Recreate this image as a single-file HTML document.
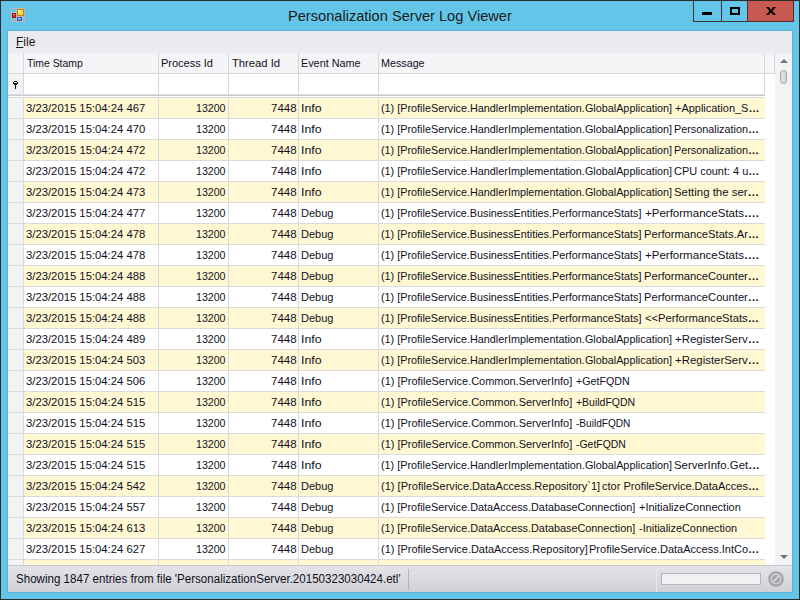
<!DOCTYPE html><html><head><meta charset="utf-8"><style>html,body{margin:0;padding:0;width:800px;height:600px;overflow:hidden;background:#2b2b2b;font-family:"Liberation Sans",sans-serif;}
div,svg{position:absolute;box-sizing:border-box;}
.t{white-space:nowrap;line-height:1;transform-origin:0 0;}
#frame{left:1px;top:1px;width:798px;height:598px;background:#63c6e8;}
#cframe{left:7px;top:30px;width:786px;height:563px;background:#58b3d4;}
#appicon{left:11px;top:8px;}
.tbtn{top:0;height:22px;border:1px solid #383838;border-top-color:#2b2b2b;}
#bmin{left:693px;width:29px;background:#63c6e8;}
#bmax{left:721px;width:27px;background:#63c6e8;}
#bclose{left:747px;width:47px;background:#c75a50;border-color:#5a2a26;border-top-color:#2b2b2b;}
.gmin{left:8px;top:11px;width:10px;height:3px;background:#000;}
.gmax{left:8px;top:6px;width:10px;height:8px;border:2px solid #000;}
.gx{left:18px;top:6px;}
#menu{left:8px;top:31px;width:784px;height:22px;background:#ebebef;}
.mi{color:#1a1a1a;line-height:14px;white-space:nowrap;}
#menu .mi{display:none;}
#hdr{left:8px;top:53px;width:767px;height:21px;background:#f5f5f7;}
.vl{width:1px;background:#d6d6dd;}
.hl{height:1px;background:#d6d6dd;}
#filt{left:8px;top:74px;width:757px;height:20px;background:#fff;}
#find{left:8px;top:74px;width:15px;height:20px;background:#f3f3f6;}
#pin{left:13px;top:81px;}
#sep{left:8px;top:94px;width:757px;height:4px;border-top:1px solid #dcdce2;border-bottom:1px solid #d6d6dd;background:linear-gradient(#c9c9d1 0 1px,#fff 1px 2px);}
#rightgap{left:765px;top:74px;width:10px;height:491px;background:#fff;}
#scroll{left:775px;top:53px;width:17px;height:512px;background:#f3f3f5;}
.arr{left:5px;width:0;height:0;border-left:4px solid transparent;border-right:4px solid transparent;}
.arr.up{top:6px;border-bottom:4px solid #6e7080;}
.arr.dn{top:502px;border-top:4px solid #6e7080;}
.thumb{left:5px;top:17px;width:7px;height:14px;border:1px solid #9ea0aa;border-radius:4px;background:linear-gradient(90deg,#e2e2e6,#d4d4da);}
#grid{left:8px;top:97px;width:757px;height:468px;overflow:hidden;background:#fff;border-top:1px solid #d9d9e0;}
#grid .vl{background:#d9d9e0;}
.row{left:0;width:757px;height:21px;border-bottom:1px solid #d9d9e0;background:#fff;}
.row{background:linear-gradient(90deg,#f3f3f6 0 15px,#d9d9e0 15px 16px,#fff 16px);}
.row.odd{background:linear-gradient(90deg,#f3f3f6 0 15px,#d9d9e0 15px 16px,#fff8d3 16px);}
#gind{display:none;}
#status{left:8px;top:565px;width:784px;height:27px;border-top:1px solid #c8c8cf;background:linear-gradient(#e4e4e8,#d0d0d6);}
#ssep{left:400px;top:3px;width:1px;height:21px;background:#b4b4bb;}
#ssep2{left:648px;top:0;width:1px;height:26px;background:#e8e8ec;}
#prog{left:653px;top:7px;width:100px;height:12px;border:1px solid #b6b6bd;background:#f1f1f3;}
#cancel{left:760px;top:5px;}
.el{letter-spacing:.5px;padding-left:.5px;font-weight:bold;}
</style></head><body>
<div id="frame"></div><div id="cframe"></div>
<svg id="appicon" width="14" height="14" viewBox="0 0 14 14" shape-rendering="crispEdges">
<rect x="0" y="0" width="14" height="14" fill="#bdb6b6"/>
<rect x="1" y="1" width="4" height="3" fill="#63c6e8"/>
<rect x="1" y="11" width="2" height="2" fill="#63c6e8"/>
<rect x="4" y="11" width="1" height="2" fill="#63c6e8"/>
<rect x="12" y="9" width="1" height="4" fill="#63c6e8"/>
<rect x="6" y="1" width="7" height="7" fill="#b08a14"/>
<rect x="7" y="2" width="5" height="5" fill="#ffd23e"/>
<rect x="7" y="2" width="3" height="3" fill="#ffe684"/>
<rect x="7" y="2" width="1" height="1" fill="#fff4c4"/>
<rect x="1" y="5" width="4" height="5" fill="#9a1410"/>
<rect x="2" y="6" width="2" height="3" fill="#d8392c"/>
<rect x="2" y="6" width="2" height="1" fill="#f08070"/>
<rect x="6" y="9" width="5" height="4" fill="#2c5cc0"/>
<rect x="7" y="10" width="3" height="2" fill="#6e9cf0"/>
<rect x="7" y="10" width="2" height="1" fill="#b0ccff"/>
</svg>
<div id="bmin" class="tbtn"><div class="gmin"></div></div>
<div id="bmax" class="tbtn"><div class="gmax"></div></div>
<div id="bclose" class="tbtn"><svg class="gx" width="10" height="8" viewBox="0 0 10 8"><path d="M0 0 H2.9 L5 2.7 L7.1 0 H10 L6.5 4 L10 8 H7.1 L5 5.3 L2.9 8 H0 L3.5 4 Z" fill="#000"/></svg></div>
<div id="menu"><span class="mi"><u>F</u>ile</span></div>
<div id="hdr"></div>
<div class="vl" style="left:23px;top:53px;height:21px"></div>
<div class="vl" style="left:158px;top:53px;height:21px"></div>
<div class="vl" style="left:228px;top:53px;height:21px"></div>
<div class="vl" style="left:298px;top:53px;height:21px"></div>
<div class="vl" style="left:378px;top:53px;height:21px"></div>
<div class="vl" style="left:764px;top:53px;height:21px"></div>
<div class="vl" style="left:774px;top:53px;height:21px"></div>
<div class="hl" style="left:8px;top:73px;width:767px"></div>
<div id="filt"></div><div id="find"></div>
<div class="vl" style="left:23px;top:74px;height:20px"></div>
<div class="vl" style="left:158px;top:74px;height:20px"></div>
<div class="vl" style="left:228px;top:74px;height:20px"></div>
<div class="vl" style="left:298px;top:74px;height:20px"></div>
<div class="vl" style="left:378px;top:74px;height:20px"></div>
<div class="vl" style="left:764px;top:74px;height:20px"></div>
<svg id="pin" width="5" height="8" viewBox="0 0 5 8" shape-rendering="crispEdges"><path d="M1 0H4V1H5V3H4V4H3V8H2V4H1V3H0V1H1Z" fill="#141414"/><rect x="1" y="1" width="3" height="1" fill="#e8e8ee"/></svg>
<div id="sep"></div>
<div id="rightgap"></div><div id="scroll"><div class="arr up"></div><div class="thumb"></div><div class="arr dn"></div></div>
<div id="grid">
<div class="row odd" style="top:0px"></div>
<div class="row" style="top:21px"></div>
<div class="row odd" style="top:42px"></div>
<div class="row" style="top:63px"></div>
<div class="row odd" style="top:84px"></div>
<div class="row" style="top:105px"></div>
<div class="row odd" style="top:126px"></div>
<div class="row" style="top:147px"></div>
<div class="row odd" style="top:168px"></div>
<div class="row" style="top:189px"></div>
<div class="row odd" style="top:210px"></div>
<div class="row" style="top:231px"></div>
<div class="row odd" style="top:252px"></div>
<div class="row" style="top:273px"></div>
<div class="row odd" style="top:294px"></div>
<div class="row" style="top:315px"></div>
<div class="row odd" style="top:336px"></div>
<div class="row" style="top:357px"></div>
<div class="row odd" style="top:378px"></div>
<div class="row" style="top:399px"></div>
<div class="row odd" style="top:420px"></div>
<div class="row" style="top:441px"></div>
<div class="row odd" style="top:462px"></div>
<div id="gind"></div>
<div class="vl" style="left:15px;top:0;height:468px"></div>
<div class="vl" style="left:150px;top:0;height:468px"></div>
<div class="vl" style="left:220px;top:0;height:468px"></div>
<div class="vl" style="left:290px;top:0;height:468px"></div>
<div class="vl" style="left:370px;top:0;height:468px"></div>
</div>
<div id="status"><div id="ssep"></div><div id="ssep2"></div><div id="prog"></div><svg id="cancel" width="17" height="17" viewBox="0 0 17 17"><circle cx="8" cy="8" r="6.6" fill="none" stroke="#a6a6a8" stroke-width="2.4"/><circle cx="8" cy="8" r="4.3" fill="#a6a6a8"/><path d="M4.6 11.4 L11.4 4.6" stroke="#d6d6da" stroke-width="1.7"/></svg></div>
<div class="t" style="left:288.00px;top:8px;font-size:15px;color:#1b1b1b;transform:scaleX(0.9737)">Personalization Server Log Viewer</div>
<div class="t" style="left:16.00px;top:36px;font-size:12px;color:#1a1a1a;transform:scaleX(1.0000)"><u>F</u>ile</div>
<div class="t" style="left:27.00px;top:58px;font-size:11px;color:#10101c;transform:scaleX(0.9474)">Time Stamp</div>
<div class="t" style="left:161.00px;top:58px;font-size:11px;color:#10101c;transform:scaleX(1.0000)">Process Id</div>
<div class="t" style="left:232.00px;top:58px;font-size:11px;color:#10101c;transform:scaleX(1.0222)">Thread Id</div>
<div class="t" style="left:301.00px;top:58px;font-size:11px;color:#10101c;transform:scaleX(0.9828)">Event Name</div>
<div class="t" style="left:381.00px;top:58px;font-size:11px;color:#10101c;transform:scaleX(0.9762)">Message</div>
<div class="t" style="left:26.00px;top:103px;font-size:11px;color:#10101c;transform:scaleX(1.0263)">3/23/2015 15:04:24 467</div>
<div class="t" style="left:196.00px;top:103px;font-size:11px;color:#10101c;transform:scaleX(0.9643)">13200</div>
<div class="t" style="left:271.00px;top:103px;font-size:11px;color:#10101c;transform:scaleX(1.0455)">7448</div>
<div class="t" style="left:301.00px;top:103px;font-size:11px;color:#10101c;transform:scaleX(1.1250)">Info</div>
<div class="t" style="left:381.00px;top:103px;font-size:11px;color:#10101c;transform:scaleX(0.9837)">(1) [ProfileService.HandlerImplementation.GlobalApplication]</div>
<div class="t" style="left:675.00px;top:103px;font-size:11px;color:#10101c;transform:scaleX(0.9959)">+Application_S<span class="el">...</span></div>
<div class="t" style="left:26.00px;top:124px;font-size:11px;color:#10101c;transform:scaleX(1.0263)">3/23/2015 15:04:24 470</div>
<div class="t" style="left:196.00px;top:124px;font-size:11px;color:#10101c;transform:scaleX(0.9643)">13200</div>
<div class="t" style="left:271.00px;top:124px;font-size:11px;color:#10101c;transform:scaleX(1.0455)">7448</div>
<div class="t" style="left:301.00px;top:124px;font-size:11px;color:#10101c;transform:scaleX(1.1250)">Info</div>
<div class="t" style="left:381.00px;top:124px;font-size:11px;color:#10101c;transform:scaleX(0.9837)">(1) [ProfileService.HandlerImplementation.GlobalApplication]</div>
<div class="t" style="left:674.00px;top:124px;font-size:11px;color:#10101c;transform:scaleX(0.9833)">Personalization<span class="el">...</span></div>
<div class="t" style="left:26.00px;top:145px;font-size:11px;color:#10101c;transform:scaleX(1.0266)">3/23/2015 15:04:24 472</div>
<div class="t" style="left:196.00px;top:145px;font-size:11px;color:#10101c;transform:scaleX(0.9643)">13200</div>
<div class="t" style="left:271.00px;top:145px;font-size:11px;color:#10101c;transform:scaleX(1.0455)">7448</div>
<div class="t" style="left:301.00px;top:145px;font-size:11px;color:#10101c;transform:scaleX(1.1250)">Info</div>
<div class="t" style="left:381.00px;top:145px;font-size:11px;color:#10101c;transform:scaleX(0.9837)">(1) [ProfileService.HandlerImplementation.GlobalApplication]</div>
<div class="t" style="left:674.00px;top:145px;font-size:11px;color:#10101c;transform:scaleX(0.9833)">Personalization<span class="el">...</span></div>
<div class="t" style="left:26.00px;top:166px;font-size:11px;color:#10101c;transform:scaleX(1.0266)">3/23/2015 15:04:24 472</div>
<div class="t" style="left:196.00px;top:166px;font-size:11px;color:#10101c;transform:scaleX(0.9643)">13200</div>
<div class="t" style="left:271.00px;top:166px;font-size:11px;color:#10101c;transform:scaleX(1.0455)">7448</div>
<div class="t" style="left:301.00px;top:166px;font-size:11px;color:#10101c;transform:scaleX(1.1250)">Info</div>
<div class="t" style="left:381.00px;top:166px;font-size:11px;color:#10101c;transform:scaleX(0.9837)">(1) [ProfileService.HandlerImplementation.GlobalApplication]</div>
<div class="t" style="left:674.00px;top:166px;font-size:11px;color:#10101c;transform:scaleX(0.9959)">CPU count: 4 u<span class="el">...</span></div>
<div class="t" style="left:26.00px;top:187px;font-size:11px;color:#10101c;transform:scaleX(1.0263)">3/23/2015 15:04:24 473</div>
<div class="t" style="left:196.00px;top:187px;font-size:11px;color:#10101c;transform:scaleX(0.9643)">13200</div>
<div class="t" style="left:271.00px;top:187px;font-size:11px;color:#10101c;transform:scaleX(1.0455)">7448</div>
<div class="t" style="left:301.00px;top:187px;font-size:11px;color:#10101c;transform:scaleX(1.1250)">Info</div>
<div class="t" style="left:381.00px;top:187px;font-size:11px;color:#10101c;transform:scaleX(0.9837)">(1) [ProfileService.HandlerImplementation.GlobalApplication]</div>
<div class="t" style="left:674.00px;top:187px;font-size:11px;color:#10101c;transform:scaleX(1.0371)">Setting the ser<span class="el">...</span></div>
<div class="t" style="left:26.00px;top:208px;font-size:11px;color:#10101c;transform:scaleX(1.0263)">3/23/2015 15:04:24 477</div>
<div class="t" style="left:196.00px;top:208px;font-size:11px;color:#10101c;transform:scaleX(0.9643)">13200</div>
<div class="t" style="left:271.00px;top:208px;font-size:11px;color:#10101c;transform:scaleX(1.0455)">7448</div>
<div class="t" style="left:301.00px;top:208px;font-size:11px;color:#10101c;transform:scaleX(1.0000)">Debug</div>
<div class="t" style="left:381.00px;top:208px;font-size:11px;color:#10101c;transform:scaleX(0.9814)">(1) [ProfileService.BusinessEntities.PerformanceStats]</div>
<div class="t" style="left:645.00px;top:208px;font-size:11px;color:#10101c;transform:scaleX(1.0478)">+PerformanceStats<span class="el">....</span></div>
<div class="t" style="left:26.00px;top:229px;font-size:11px;color:#10101c;transform:scaleX(1.0263)">3/23/2015 15:04:24 478</div>
<div class="t" style="left:196.00px;top:229px;font-size:11px;color:#10101c;transform:scaleX(0.9643)">13200</div>
<div class="t" style="left:271.00px;top:229px;font-size:11px;color:#10101c;transform:scaleX(1.0455)">7448</div>
<div class="t" style="left:301.00px;top:229px;font-size:11px;color:#10101c;transform:scaleX(1.0000)">Debug</div>
<div class="t" style="left:381.00px;top:229px;font-size:11px;color:#10101c;transform:scaleX(0.9814)">(1) [ProfileService.BusinessEntities.PerformanceStats]</div>
<div class="t" style="left:644.00px;top:229px;font-size:11px;color:#10101c;transform:scaleX(1.0174)">PerformanceStats.Ar<span class="el">...</span></div>
<div class="t" style="left:26.00px;top:250px;font-size:11px;color:#10101c;transform:scaleX(1.0263)">3/23/2015 15:04:24 478</div>
<div class="t" style="left:196.00px;top:250px;font-size:11px;color:#10101c;transform:scaleX(0.9643)">13200</div>
<div class="t" style="left:271.00px;top:250px;font-size:11px;color:#10101c;transform:scaleX(1.0455)">7448</div>
<div class="t" style="left:301.00px;top:250px;font-size:11px;color:#10101c;transform:scaleX(1.0000)">Debug</div>
<div class="t" style="left:381.00px;top:250px;font-size:11px;color:#10101c;transform:scaleX(0.9814)">(1) [ProfileService.BusinessEntities.PerformanceStats]</div>
<div class="t" style="left:645.00px;top:250px;font-size:11px;color:#10101c;transform:scaleX(1.0478)">+PerformanceStats<span class="el">....</span></div>
<div class="t" style="left:26.00px;top:271px;font-size:11px;color:#10101c;transform:scaleX(1.0263)">3/23/2015 15:04:24 488</div>
<div class="t" style="left:196.00px;top:271px;font-size:11px;color:#10101c;transform:scaleX(0.9643)">13200</div>
<div class="t" style="left:271.00px;top:271px;font-size:11px;color:#10101c;transform:scaleX(1.0455)">7448</div>
<div class="t" style="left:301.00px;top:271px;font-size:11px;color:#10101c;transform:scaleX(1.0000)">Debug</div>
<div class="t" style="left:381.00px;top:271px;font-size:11px;color:#10101c;transform:scaleX(0.9814)">(1) [ProfileService.BusinessEntities.PerformanceStats]</div>
<div class="t" style="left:644.00px;top:271px;font-size:11px;color:#10101c;transform:scaleX(1.0169)">PerformanceCounter<span class="el">...</span></div>
<div class="t" style="left:26.00px;top:292px;font-size:11px;color:#10101c;transform:scaleX(1.0263)">3/23/2015 15:04:24 488</div>
<div class="t" style="left:196.00px;top:292px;font-size:11px;color:#10101c;transform:scaleX(0.9643)">13200</div>
<div class="t" style="left:271.00px;top:292px;font-size:11px;color:#10101c;transform:scaleX(1.0455)">7448</div>
<div class="t" style="left:301.00px;top:292px;font-size:11px;color:#10101c;transform:scaleX(1.0000)">Debug</div>
<div class="t" style="left:381.00px;top:292px;font-size:11px;color:#10101c;transform:scaleX(0.9814)">(1) [ProfileService.BusinessEntities.PerformanceStats]</div>
<div class="t" style="left:644.00px;top:292px;font-size:11px;color:#10101c;transform:scaleX(1.0171)">PerformanceCounter<span class="el">...</span></div>
<div class="t" style="left:26.00px;top:313px;font-size:11px;color:#10101c;transform:scaleX(1.0263)">3/23/2015 15:04:24 488</div>
<div class="t" style="left:196.00px;top:313px;font-size:11px;color:#10101c;transform:scaleX(0.9643)">13200</div>
<div class="t" style="left:271.00px;top:313px;font-size:11px;color:#10101c;transform:scaleX(1.0455)">7448</div>
<div class="t" style="left:301.00px;top:313px;font-size:11px;color:#10101c;transform:scaleX(1.0000)">Debug</div>
<div class="t" style="left:381.00px;top:313px;font-size:11px;color:#10101c;transform:scaleX(0.9814)">(1) [ProfileService.BusinessEntities.PerformanceStats]</div>
<div class="t" style="left:645.00px;top:313px;font-size:11px;color:#10101c;transform:scaleX(1.0172)">&lt;&lt;PerformanceStats<span class="el">...</span></div>
<div class="t" style="left:26.00px;top:334px;font-size:11px;color:#10101c;transform:scaleX(1.0263)">3/23/2015 15:04:24 489</div>
<div class="t" style="left:196.00px;top:334px;font-size:11px;color:#10101c;transform:scaleX(0.9643)">13200</div>
<div class="t" style="left:271.00px;top:334px;font-size:11px;color:#10101c;transform:scaleX(1.0455)">7448</div>
<div class="t" style="left:301.00px;top:334px;font-size:11px;color:#10101c;transform:scaleX(1.1250)">Info</div>
<div class="t" style="left:381.00px;top:334px;font-size:11px;color:#10101c;transform:scaleX(0.9837)">(1) [ProfileService.HandlerImplementation.GlobalApplication]</div>
<div class="t" style="left:675.00px;top:334px;font-size:11px;color:#10101c;transform:scaleX(1.0392)">+RegisterServ<span class="el">...</span></div>
<div class="t" style="left:26.00px;top:355px;font-size:11px;color:#10101c;transform:scaleX(1.0263)">3/23/2015 15:04:24 503</div>
<div class="t" style="left:196.00px;top:355px;font-size:11px;color:#10101c;transform:scaleX(0.9643)">13200</div>
<div class="t" style="left:271.00px;top:355px;font-size:11px;color:#10101c;transform:scaleX(1.0455)">7448</div>
<div class="t" style="left:301.00px;top:355px;font-size:11px;color:#10101c;transform:scaleX(1.1250)">Info</div>
<div class="t" style="left:381.00px;top:355px;font-size:11px;color:#10101c;transform:scaleX(0.9837)">(1) [ProfileService.HandlerImplementation.GlobalApplication]</div>
<div class="t" style="left:675.00px;top:355px;font-size:11px;color:#10101c;transform:scaleX(1.0392)">+RegisterServ<span class="el">...</span></div>
<div class="t" style="left:26.00px;top:376px;font-size:11px;color:#10101c;transform:scaleX(1.0263)">3/23/2015 15:04:24 506</div>
<div class="t" style="left:196.00px;top:376px;font-size:11px;color:#10101c;transform:scaleX(0.9643)">13200</div>
<div class="t" style="left:271.00px;top:376px;font-size:11px;color:#10101c;transform:scaleX(1.0455)">7448</div>
<div class="t" style="left:301.00px;top:376px;font-size:11px;color:#10101c;transform:scaleX(1.1250)">Info</div>
<div class="t" style="left:381.00px;top:376px;font-size:11px;color:#10101c;transform:scaleX(0.9964)">(1) [ProfileService.Common.ServerInfo]</div>
<div class="t" style="left:576.00px;top:376px;font-size:11px;color:#10101c;transform:scaleX(0.9700)">+GetFQDN</div>
<div class="t" style="left:26.00px;top:397px;font-size:11px;color:#10101c;transform:scaleX(1.0263)">3/23/2015 15:04:24 515</div>
<div class="t" style="left:196.00px;top:397px;font-size:11px;color:#10101c;transform:scaleX(0.9643)">13200</div>
<div class="t" style="left:271.00px;top:397px;font-size:11px;color:#10101c;transform:scaleX(1.0455)">7448</div>
<div class="t" style="left:301.00px;top:397px;font-size:11px;color:#10101c;transform:scaleX(1.1250)">Info</div>
<div class="t" style="left:381.00px;top:397px;font-size:11px;color:#10101c;transform:scaleX(0.9964)">(1) [ProfileService.Common.ServerInfo]</div>
<div class="t" style="left:576.00px;top:397px;font-size:11px;color:#10101c;transform:scaleX(0.9530)">+BuildFQDN</div>
<div class="t" style="left:26.00px;top:418px;font-size:11px;color:#10101c;transform:scaleX(1.0263)">3/23/2015 15:04:24 515</div>
<div class="t" style="left:196.00px;top:418px;font-size:11px;color:#10101c;transform:scaleX(0.9643)">13200</div>
<div class="t" style="left:271.00px;top:418px;font-size:11px;color:#10101c;transform:scaleX(1.0455)">7448</div>
<div class="t" style="left:301.00px;top:418px;font-size:11px;color:#10101c;transform:scaleX(1.1250)">Info</div>
<div class="t" style="left:381.00px;top:418px;font-size:11px;color:#10101c;transform:scaleX(0.9964)">(1) [ProfileService.Common.ServerInfo]</div>
<div class="t" style="left:576.00px;top:418px;font-size:11px;color:#10101c;transform:scaleX(0.9171)">-BuildFQDN</div>
<div class="t" style="left:26.00px;top:439px;font-size:11px;color:#10101c;transform:scaleX(1.0263)">3/23/2015 15:04:24 515</div>
<div class="t" style="left:196.00px;top:439px;font-size:11px;color:#10101c;transform:scaleX(0.9643)">13200</div>
<div class="t" style="left:271.00px;top:439px;font-size:11px;color:#10101c;transform:scaleX(1.0455)">7448</div>
<div class="t" style="left:301.00px;top:439px;font-size:11px;color:#10101c;transform:scaleX(1.1250)">Info</div>
<div class="t" style="left:381.00px;top:439px;font-size:11px;color:#10101c;transform:scaleX(0.9964)">(1) [ProfileService.Common.ServerInfo]</div>
<div class="t" style="left:576.00px;top:439px;font-size:11px;color:#10101c;transform:scaleX(0.9498)">-GetFQDN</div>
<div class="t" style="left:26.00px;top:460px;font-size:11px;color:#10101c;transform:scaleX(1.0263)">3/23/2015 15:04:24 515</div>
<div class="t" style="left:196.00px;top:460px;font-size:11px;color:#10101c;transform:scaleX(0.9643)">13200</div>
<div class="t" style="left:271.00px;top:460px;font-size:11px;color:#10101c;transform:scaleX(1.0455)">7448</div>
<div class="t" style="left:301.00px;top:460px;font-size:11px;color:#10101c;transform:scaleX(1.1250)">Info</div>
<div class="t" style="left:381.00px;top:460px;font-size:11px;color:#10101c;transform:scaleX(0.9837)">(1) [ProfileService.HandlerImplementation.GlobalApplication]</div>
<div class="t" style="left:674.00px;top:460px;font-size:11px;color:#10101c;transform:scaleX(1.0368)">ServerInfo.Get<span class="el">...</span></div>
<div class="t" style="left:26.00px;top:481px;font-size:11px;color:#10101c;transform:scaleX(1.0266)">3/23/2015 15:04:24 542</div>
<div class="t" style="left:196.00px;top:481px;font-size:11px;color:#10101c;transform:scaleX(0.9643)">13200</div>
<div class="t" style="left:271.00px;top:481px;font-size:11px;color:#10101c;transform:scaleX(1.0455)">7448</div>
<div class="t" style="left:301.00px;top:481px;font-size:11px;color:#10101c;transform:scaleX(1.0000)">Debug</div>
<div class="t" style="left:381.00px;top:481px;font-size:11px;color:#10101c;transform:scaleX(1.0072)">(1) [ProfileService.DataAccess.Repository`1]</div>
<div class="t" style="left:602.00px;top:481px;font-size:11px;color:#10101c;transform:scaleX(1.0033)">ctor ProfileService.DataAcces<span class="el">...</span></div>
<div class="t" style="left:26.00px;top:502px;font-size:11px;color:#10101c;transform:scaleX(1.0263)">3/23/2015 15:04:24 557</div>
<div class="t" style="left:196.00px;top:502px;font-size:11px;color:#10101c;transform:scaleX(0.9643)">13200</div>
<div class="t" style="left:271.00px;top:502px;font-size:11px;color:#10101c;transform:scaleX(1.0455)">7448</div>
<div class="t" style="left:301.00px;top:502px;font-size:11px;color:#10101c;transform:scaleX(1.0000)">Debug</div>
<div class="t" style="left:381.00px;top:502px;font-size:11px;color:#10101c;transform:scaleX(0.9856)">(1) [ProfileService.DataAccess.DatabaseConnection]</div>
<div class="t" style="left:639.00px;top:502px;font-size:11px;color:#10101c;transform:scaleX(1.0003)">+InitializeConnection</div>
<div class="t" style="left:26.00px;top:523px;font-size:11px;color:#10101c;transform:scaleX(1.0263)">3/23/2015 15:04:24 613</div>
<div class="t" style="left:196.00px;top:523px;font-size:11px;color:#10101c;transform:scaleX(0.9643)">13200</div>
<div class="t" style="left:271.00px;top:523px;font-size:11px;color:#10101c;transform:scaleX(1.0455)">7448</div>
<div class="t" style="left:301.00px;top:523px;font-size:11px;color:#10101c;transform:scaleX(1.0000)">Debug</div>
<div class="t" style="left:381.00px;top:523px;font-size:11px;color:#10101c;transform:scaleX(0.9856)">(1) [ProfileService.DataAccess.DatabaseConnection]</div>
<div class="t" style="left:639.00px;top:523px;font-size:11px;color:#10101c;transform:scaleX(0.9907)">-InitializeConnection</div>
<div class="t" style="left:26.00px;top:544px;font-size:11px;color:#10101c;transform:scaleX(1.0263)">3/23/2015 15:04:24 627</div>
<div class="t" style="left:196.00px;top:544px;font-size:11px;color:#10101c;transform:scaleX(0.9643)">13200</div>
<div class="t" style="left:271.00px;top:544px;font-size:11px;color:#10101c;transform:scaleX(1.0455)">7448</div>
<div class="t" style="left:301.00px;top:544px;font-size:11px;color:#10101c;transform:scaleX(1.0000)">Debug</div>
<div class="t" style="left:381.00px;top:544px;font-size:11px;color:#10101c;transform:scaleX(0.9944)">(1) [ProfileService.DataAccess.Repository]</div>
<div class="t" style="left:589.00px;top:544px;font-size:11px;color:#10101c;transform:scaleX(1.0006)">ProfileService.DataAccess.IntCo<span class="el">...</span></div>
<div class="t" style="left:16.00px;top:573px;font-size:12px;color:#10101c;transform:scaleX(0.9643)">Showing 1847 entries from file 'PersonalizationServer.20150323030424.etl'</div>
</body></html>
